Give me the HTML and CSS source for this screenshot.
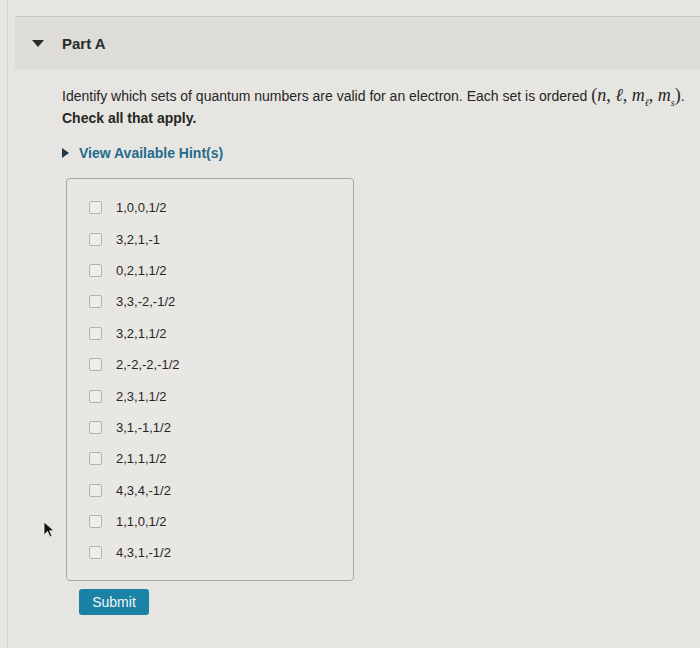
FILE: index.html
```html
<!DOCTYPE html>
<html>
<head>
<meta charset="utf-8">
<link rel="stylesheet" href="styles.css">
</head>
<body>
<div class="page">
  <div class="edge"></div>
  <div class="header">
    <span class="caret-down"></span>
    <span class="part">Part A</span>
  </div>
  <div class="content">
    <p class="question">Identify which sets of quantum numbers are valid for an electron. Each set is ordered <span class="math">(<i>n</i>, <i>ℓ</i>, <i>m</i><sub><i>ℓ</i></sub>, <i>m</i><sub><i>s</i></sub>)</span>.</p>
    <p class="check">Check all that apply.</p>
    <div class="hint"><span class="caret-right"></span><span>View Available Hint(s)</span></div>
    <div class="box">
      <label class="row"><span class="cb"></span><span>1,0,0,1/2</span></label>
      <label class="row"><span class="cb"></span><span>3,2,1,-1</span></label>
      <label class="row"><span class="cb"></span><span>0,2,1,1/2</span></label>
      <label class="row"><span class="cb"></span><span>3,3,-2,-1/2</span></label>
      <label class="row"><span class="cb"></span><span>3,2,1,1/2</span></label>
      <label class="row"><span class="cb"></span><span>2,-2,-2,-1/2</span></label>
      <label class="row"><span class="cb"></span><span>2,3,1,1/2</span></label>
      <label class="row"><span class="cb"></span><span>3,1,-1,1/2</span></label>
      <label class="row"><span class="cb"></span><span>2,1,1,1/2</span></label>
      <label class="row"><span class="cb"></span><span>4,3,4,-1/2</span></label>
      <label class="row"><span class="cb"></span><span>1,1,0,1/2</span></label>
      <label class="row"><span class="cb"></span><span>4,3,1,-1/2</span></label>
    </div>
    <button class="submit">Submit</button>
  </div>
  <svg class="cursor" width="14" height="18" viewBox="0 0 14 18"><path d="M1 1 L1 14 L4.5 10.5 L7 16 L9 15 L6.6 9.8 L11 9.8 Z" fill="#111" stroke="#f2f2f2" stroke-width="0.8"/></svg>
</div>
</body>
</html>
```
FILE: styles.css
```css
html, body {
  margin: 0;
  padding: 0;
  background: #e7e5e1;
}
.page {
  position: relative;
  width: 700px;
  height: 648px;
  padding-top: 16px;
  box-sizing: border-box;
  font-family: "Liberation Sans", Arial, sans-serif;
  color: #262626;
  overflow: hidden;
}
.edge {
  position: absolute;
  left: 7px;
  top: 0;
  bottom: 0;
  width: 1px;
  background: #d2d0cc;
}
.header {
  margin-left: 15px;
  height: 52px;
  border-top: 1px solid #c6c4c0;
  background: #dedcd8;
  display: flex;
  align-items: center;
  padding-left: 17px;
}
.caret-down {
  width: 0;
  height: 0;
  border-left: 6px solid transparent;
  border-right: 6px solid transparent;
  border-top: 7px solid #2b2b2b;
  margin-right: 18px;
}
.part {
  font-size: 15px;
  font-weight: bold;
  color: #2a2a2a;
}
.content {
  padding-left: 62px;
}
.question {
  margin: 17px 0 0 0;
  font-size: 14px;
  line-height: 20px;
}
.math {
  font-family: "Liberation Serif", "Times New Roman", serif;
  font-size: 18px;
  line-height: 1;
}
.math sub {
  font-size: 10px;
  line-height: 0;
}
.check {
  margin: 2px 0 0 0;
  font-size: 14px;
  font-weight: bold;
  line-height: 20px;
}
.hint {
  margin-top: 17px;
  display: flex;
  align-items: center;
  font-size: 14px;
  font-weight: bold;
  color: #1f6c8c;
}
.caret-right {
  width: 0;
  height: 0;
  border-top: 5px solid transparent;
  border-bottom: 5px solid transparent;
  border-left: 7px solid #1f3a4a;
  margin-right: 10px;
}
.box {
  margin-top: 17px;
  margin-left: 4px;
  width: 288px;
  border: 1px solid #a8a6a2;
  border-radius: 4px;
  background: #e9e7e3;
  padding: 13px 0 11px 22px;
  box-sizing: border-box;
}
.row {
  display: flex;
  align-items: center;
  height: 31.4px;
  font-size: 13px;
  color: #262626;
}
.cb {
  width: 11px;
  height: 11px;
  border: 1px solid #b4b2ae;
  border-radius: 2px;
  background: #efedea;
  margin-right: 14px;
}
.submit {
  margin-top: 8px;
  margin-left: 17px;
  width: 70px;
  height: 26px;
  border: none;
  border-radius: 3px;
  background: #1a83a5;
  color: #f4f6f7;
  font-family: "Liberation Sans", Arial, sans-serif;
  font-size: 14px;
  padding: 0;
}
.cursor {
  position: absolute;
  left: 43px;
  top: 521px;
}
```
